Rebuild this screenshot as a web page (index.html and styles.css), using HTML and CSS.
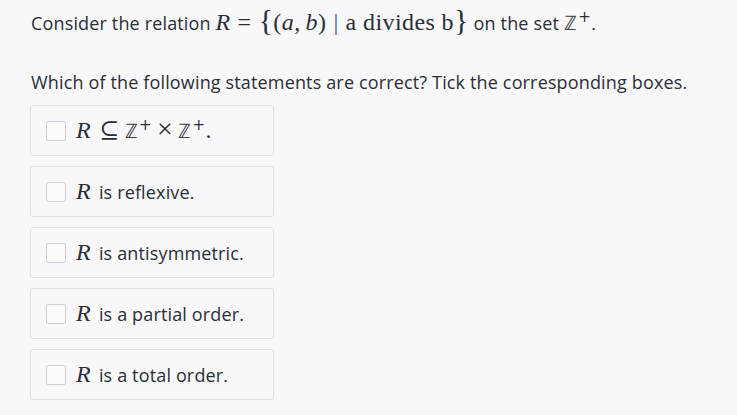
FILE: index.html
```html
<!DOCTYPE html>
<html>
<head>
<meta charset="utf-8">
<link rel="stylesheet" href="styles.css">
</head>
<body>
<div class="page">
  <p class="line first">Consider the relation <span class="m"><i>R</i><span class="rel wide">=</span><span class="big">{</span>(<i>a</i>,<span class="thin"></span><i>b</i>)<span class="rel wide bar">|</span>a divides b<span class="big">}</span></span> on the set <span class="m"><span class="bb">ℤ</span><sup>+</sup></span>.</p>
  <p class="line second">Which of the following statements are correct? Tick the corresponding boxes.</p>
  <div class="opts">
    <label class="opt"><span class="cb"></span><span class="txt"><span class="m"><i>R</i><span class="rel">⊆</span><span class="bb">ℤ</span><sup>+</sup><span class="rel times">×</span><span class="bb">ℤ</span><sup>+</sup>.</span></span></label>
    <label class="opt"><span class="cb"></span><span class="txt"><span class="m"><i>R</i></span> is reflexive.</span></label>
    <label class="opt"><span class="cb"></span><span class="txt"><span class="m"><i>R</i></span> is antisymmetric.</span></label>
    <label class="opt"><span class="cb"></span><span class="txt"><span class="m"><i>R</i></span> is a partial order.</span></label>
    <label class="opt"><span class="cb"></span><span class="txt"><span class="m"><i>R</i></span> is a total order.</span></label>
  </div>
</div>
</body>
</html>
```
FILE: styles.css
```css
html, body {
  margin: 0;
  padding: 0;
  background: #f8f8fa;
}
body {
  font-family: "Open Sans", "Liberation Sans", sans-serif;
  color: #2a2e35;
  font-size: 18px;
  letter-spacing: 0.15px;
}
.page {
  padding: 8px 0 0 31px;
}
.line {
  margin: 0;
  line-height: 28px;
}
.second {
  margin-top: 31px;
}
.m {
  font-family: "Liberation Serif", "DejaVu Serif", serif;
  font-size: 24px;
  letter-spacing: 0.4px;
}
.m i {
  font-style: italic;
}
.rel {
  margin: 0 5px;
}
.rel.wide {
  margin: 0 7px;
}
.times {
  font-size: 28px;
  line-height: 0;
}
.bar {
  color: #3a5a88;
}
.thin {
  display: inline-block;
  width: 5px;
}
.big {
  font-size: 30px;
  line-height: 0;
}
.bb {
  font-family: "DejaVu Sans", sans-serif;
  font-size: 20px;
  font-weight: 300;
  color: #3a3e45;
}
sup {
  font-family: "DejaVu Sans", sans-serif;
  font-size: 15px;
  line-height: 0;
  vertical-align: 8px;
  margin-left: 1px;
}
.opts {
  display: flex;
  flex-direction: column;
  gap: 10px;
  margin: 9px 0 0 -1px;
  width: 244px;
}
.opt {
  display: flex;
  align-items: center;
  height: 51px;
  box-sizing: border-box;
  border: 1px solid #e1e2e6;
  border-radius: 3px;
  padding-left: 15px;
}
.cb {
  width: 20px;
  height: 20px;
  box-sizing: border-box;
  border: 1px solid #cdd1d8;
  border-radius: 2px;
  background: #fbfbfc;
  flex: none;
}
.txt {
  margin-left: 10px;
  line-height: 24px;
}
.txt .m i {
  margin-right: 3px;
}
```
